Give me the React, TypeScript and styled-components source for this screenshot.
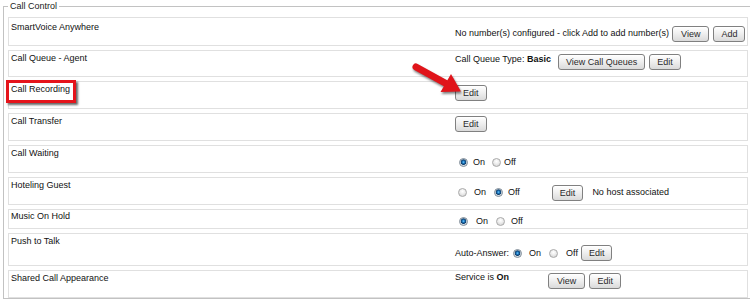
import React from 'react';
import styled, { createGlobalStyle } from 'styled-components';

const Global = createGlobalStyle`
  html, body { margin: 0; padding: 0; background: #fff; overflow: hidden; }
  body {
    font-family: "Liberation Sans", Arial, sans-serif;
    font-size: 9px;
    color: #111;
  }
`;

const Page = styled.div`
  position: relative;
  width: 750px;
  height: 302px;
  overflow: hidden;
  padding-top: 1px;
  box-sizing: border-box;
`;

const Fieldset = styled.fieldset`
  margin: 0 0 0 3px;
  width: 752px;
  box-sizing: border-box;
  border: 1px solid #c2c2c2;
  padding: 5px 6px 0 4px;
  min-inline-size: auto;
`;

const Legend = styled.legend`
  padding: 0 2px;
  font-size: 9px;
  line-height: 11px;
  color: #1a1a1a;
`;

const Rows = styled.div`
  display: flex;
  flex-direction: column;
  gap: 4px;
`;

const Row = styled.div<{ $h: number }>`
  display: flex;
  height: ${(p) => p.$h}px;
  box-sizing: border-box;
  border: 1px solid #e0e0e0;
`;

const Label = styled.div<{ $pt: number }>`
  flex: none;
  width: 444px;
  padding: ${(p) => p.$pt}px 0 0 2px;
  line-height: 11px;
`;

const Value = styled.div<{ $pt: number; $align?: string }>`
  display: flex;
  align-items: ${(p) => p.$align || 'center'};
  padding-top: ${(p) => p.$pt}px;
  line-height: 11px;
  white-space: nowrap;
`;

const Text = styled.span<{ $ml?: number; $mt?: number }>`
  margin-left: ${(p) => p.$ml || 0}px;
  margin-top: ${(p) => p.$mt || 0}px;
  line-height: 11px;
  b { font-weight: bold; }
`;

const Button = styled.button<{ $ml?: number; $px?: number }>`
  margin: 0 0 0 ${(p) => p.$ml || 0}px;
  height: 16px;
  padding: 0 ${(p) => p.$px ?? 7}px;
  font-family: "Liberation Sans", Arial, sans-serif;
  font-size: 9px;
  line-height: 14px;
  color: #2a2a2a;
  border: 1px solid #808080;
  border-radius: 3px;
  background: linear-gradient(#ffffff 0%, #f0f0f0 45%, #dadada 100%);
  box-shadow: inset 0 1px 0 #fff;
  cursor: pointer;
`;

const Radio = styled.span<{ $on?: boolean; $ml?: number }>`
  display: inline-block;
  flex: none;
  width: 9px;
  height: 9px;
  box-sizing: border-box;
  margin-left: ${(p) => p.$ml || 0}px;
  border-radius: 50%;
  border: 1px solid ${(p) => (p.$on ? '#7d8a96' : '#a9a9a9')};
  background: ${(p) =>
    p.$on
      ? 'radial-gradient(circle at 50% 45%, #6fd0ff 0, #1f78c0 1.2px, #0c3d6b 2.4px, #c9d3dc 3.1px, #f2f4f6 4px)'
      : 'radial-gradient(circle at 50% 35%, #ffffff 0, #f1f1f1 2px, #d9d9d9 4.5px)'};
`;

const Highlight = styled.div`
  position: absolute;
  left: 6px;
  top: 80px;
  width: 70px;
  height: 23px;
  box-sizing: border-box;
  border: 3px solid #e5141b;
  box-shadow: 2px 2px 2px rgba(0, 0, 0, 0.6);
  pointer-events: none;
`;

const ArrowSvg = styled.svg`
  position: absolute;
  left: 0;
  top: 0;
  pointer-events: none;
  filter: drop-shadow(1px 2px 1px rgba(0, 0, 0, 0.5));
`;

const Arrow = () => (
  <ArrowSvg width="750" height="302" viewBox="0 0 750 302">
    <line x1="416" y1="67" x2="446" y2="83.5" stroke="#e0141a" strokeWidth="7" strokeLinecap="round" />
    <polygon points="461,91.5 440.5,92 451,74" fill="#e0141a" />
  </ArrowSvg>
);

export default function App() {
  return (
    <Page>
      <Global />
      <Fieldset>
        <Legend>Call Control</Legend>
        <Rows>
          <Row $h={29}>
            <Label $pt={4}>SmartVoice Anywhere</Label>
            <Value $pt={4}>
              <Text>No number(s) configured - click Add to add number(s)</Text>
              <Button $ml={3} $px={8}>View</Button>
              <Button $ml={4}>Add</Button>
            </Value>
          </Row>
          <Row $h={27}>
            <Label $pt={2}>Call Queue - Agent</Label>
            <Value $pt={3} $align="flex-start">
              <Text>
                Call Queue Type: <b>Basic</b>
              </Text>
              <Button $ml={7}>View Call Queues</Button>
              <Button $ml={4}>Edit</Button>
            </Value>
          </Row>
          <Row $h={28}>
            <Label $pt={2}>Call Recording</Label>
            <Value $pt={3} $align="flex-start">
              <Button>Edit</Button>
            </Value>
          </Row>
          <Row $h={28}>
            <Label $pt={2}>Call Transfer</Label>
            <Value $pt={2} $align="flex-start">
              <Button>Edit</Button>
            </Value>
          </Row>
          <Row $h={28}>
            <Label $pt={2}>Call Waiting</Label>
            <Value $pt={6}>
              <Radio $on $ml={4} />
              <Text $ml={5}>On</Text>
              <Radio $ml={7} />
              <Text $ml={3}>Off</Text>
            </Value>
          </Row>
          <Row $h={28}>
            <Label $pt={2}>Hoteling Guest</Label>
            <Value $pt={3}>
              <Radio $ml={3} />
              <Text $ml={7}>On</Text>
              <Radio $on $ml={8} />
              <Text $ml={5}>Off</Text>
              <Button $ml={32}>Edit</Button>
              <Text $ml={9}>No host associated</Text>
            </Value>
          </Row>
          <Row $h={20}>
            <Label $pt={1}>Music On Hold</Label>
            <Value $pt={4}>
              <Radio $on $ml={4} />
              <Text $ml={8}>On</Text>
              <Radio $ml={8} />
              <Text $ml={6}>Off</Text>
            </Value>
          </Row>
          <Row $h={33}>
            <Label $pt={2}>Push to Talk</Label>
            <Value $pt={7}>
              <Text>Auto-Answer:</Text>
              <Radio $on $ml={4} />
              <Text $ml={7}>On</Text>
              <Radio $ml={8} />
              <Text $ml={8}>Off</Text>
              <Button $ml={3}>Edit</Button>
            </Value>
          </Row>
          <Row $h={28}>
            <Label $pt={2}>Shared Call Appearance</Label>
            <Value $pt={2} $align="flex-start">
              <Text $mt={-1}>
                Service is <b>On</b>
              </Text>
              <Button $ml={39} $px={8}>View</Button>
              <Button $ml={4}>Edit</Button>
            </Value>
          </Row>
        </Rows>
      </Fieldset>
      <Highlight />
      <Arrow />
    </Page>
  );
}
